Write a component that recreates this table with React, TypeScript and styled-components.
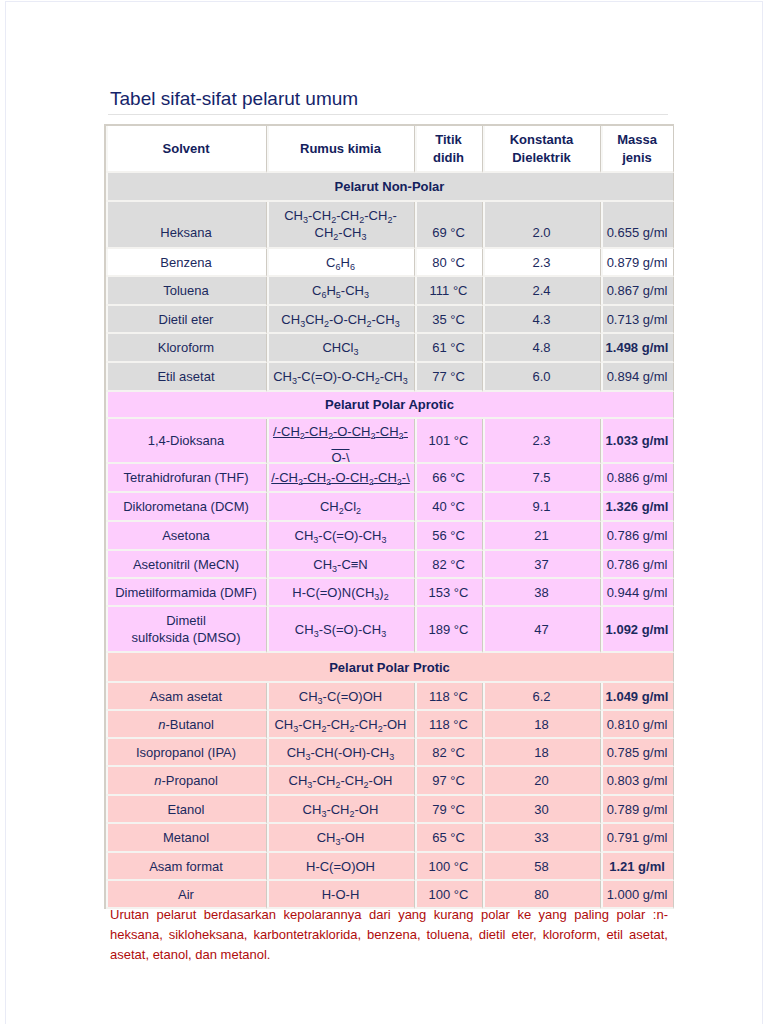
import React from "react";
import styled, { createGlobalStyle } from "styled-components";

const GlobalStyle = createGlobalStyle`
  html, body {
    margin: 0;
    padding: 0;
    background: #ffffff;
  }
  body {
    font-family: "Liberation Sans", Arial, sans-serif;
  }
`;

// "CH_3-CH_2" -> CH<sub>3</sub>-CH<sub>2</sub>
const f = (s: string): React.ReactNode[] =>
  s.split(/_(\d)/).map((part, i) =>
    i % 2 === 1 ? <Sub key={i}>{part}</Sub> : <React.Fragment key={i}>{part}</React.Fragment>
  );

type DataRow = {
  name: React.ReactNode;
  formula: React.ReactNode;
  bp: string;
  dielectric: string;
  density: string;
  boldDensity?: boolean;
  h?: number;
  align?: "middle" | "bottom" | "top";
};

type Section = {
  title: string;
  bg: string;
  h: number;
  rows: DataRow[];
  rowBg?: (i: number) => string;
};

// built at render time so the styled parts below are already defined
const buildSections = (): Section[] => [
  {
    title: "Pelarut Non-Polar",
    bg: "#dcdcdc",
    h: 29,
    rowBg: (i) => (i === 1 ? "#ffffff" : "#dcdcdc"),
    rows: [
      {
        name: "Heksana",
        formula: (
          <>
            {f("CH_3-CH_2-CH_2-CH_2-")}
            <br />
            {f("CH_2-CH_3")}
          </>
        ),
        bp: "69 °C",
        dielectric: "2.0",
        density: "0.655 g/ml",
        h: 47,
        align: "bottom",
      },
      { name: "Benzena", formula: f("C_6H_6"), bp: "80 °C", dielectric: "2.3", density: "0.879 g/ml", h: 28 },
      { name: "Toluena", formula: f("C_6H_5-CH_3"), bp: "111 °C", dielectric: "2.4", density: "0.867 g/ml", h: 29 },
      { name: "Dietil eter", formula: f("CH_3CH_2-O-CH_2-CH_3"), bp: "35 °C", dielectric: "4.3", density: "0.713 g/ml", h: 28 },
      { name: "Kloroform", formula: f("CHCl_3"), bp: "61 °C", dielectric: "4.8", density: "1.498 g/ml", boldDensity: true, h: 29 },
      { name: "Etil asetat", formula: f("CH_3-C(=O)-O-CH_2-CH_3"), bp: "77 °C", dielectric: "6.0", density: "0.894 g/ml", h: 29 },
    ],
  },
  {
    title: "Pelarut Polar Aprotic",
    bg: "#fdcdfd",
    h: 27,
    rows: [
      {
        name: "1,4-Dioksana",
        formula: (
          <RingFormula>
            <Underlined>{f("/-CH_2-CH_2-O-CH_2-CH_2-")}</Underlined>
            <Overlined>O-\</Overlined>
          </RingFormula>
        ),
        bp: "101 °C",
        dielectric: "2.3",
        density: "1.033 g/ml",
        boldDensity: true,
        h: 45,
      },
      {
        name: "Tetrahidrofuran (THF)",
        formula: <Underlined>{f("/-CH_2-CH_2-O-CH_2-CH_2-\\")}</Underlined>,
        bp: "66 °C",
        dielectric: "7.5",
        density: "0.886 g/ml",
        h: 29,
      },
      { name: "Diklorometana (DCM)", formula: f("CH_2Cl_2"), bp: "40 °C", dielectric: "9.1", density: "1.326 g/ml", boldDensity: true, h: 29 },
      { name: "Asetona", formula: f("CH_3-C(=O)-CH_3"), bp: "56 °C", dielectric: "21", density: "0.786 g/ml", h: 29 },
      { name: "Asetonitril (MeCN)", formula: f("CH_3-C≡N"), bp: "82 °C", dielectric: "37", density: "0.786 g/ml", h: 28 },
      { name: "Dimetilformamida (DMF)", formula: f("H-C(=O)N(CH_3)_2"), bp: "153 °C", dielectric: "38", density: "0.944 g/ml", h: 28 },
      {
        name: (
          <>
            Dimetil
            <br />
            sulfoksida (DMSO)
          </>
        ),
        formula: f("CH_3-S(=O)-CH_3"),
        bp: "189 °C",
        dielectric: "47",
        density: "1.092 g/ml",
        boldDensity: true,
        h: 46,
      },
    ],
  },
  {
    title: "Pelarut Polar Protic",
    bg: "#fdcfcf",
    h: 30,
    rows: [
      { name: "Asam asetat", formula: f("CH_3-C(=O)OH"), bp: "118 °C", dielectric: "6.2", density: "1.049 g/ml", boldDensity: true, h: 28 },
      {
        name: (
          <>
            <i>n</i>-Butanol
          </>
        ),
        formula: f("CH_3-CH_2-CH_2-CH_2-OH"),
        bp: "118 °C",
        dielectric: "18",
        density: "0.810 g/ml",
        h: 28,
      },
      { name: "Isopropanol (IPA)", formula: f("CH_3-CH(-OH)-CH_3"), bp: "82 °C", dielectric: "18", density: "0.785 g/ml", h: 28 },
      {
        name: (
          <>
            <i>n</i>-Propanol
          </>
        ),
        formula: f("CH_3-CH_2-CH_2-OH"),
        bp: "97 °C",
        dielectric: "20",
        density: "0.803 g/ml",
        h: 29,
      },
      { name: "Etanol", formula: f("CH_3-CH_2-OH"), bp: "79 °C", dielectric: "30", density: "0.789 g/ml", h: 28 },
      { name: "Metanol", formula: f("CH_3-OH"), bp: "65 °C", dielectric: "33", density: "0.791 g/ml", h: 29 },
      { name: "Asam format", formula: f("H-C(=O)OH"), bp: "100 °C", dielectric: "58", density: "1.21 g/ml", boldDensity: true, h: 28 },
      { name: "Air", formula: f("H-O-H"), bp: "100 °C", dielectric: "80", density: "1.000 g/ml", h: 28 },
    ],
  },
];

const App: React.FC = () => {
  const sections = buildSections();
  return (
    <>
      <GlobalStyle />
      <Page>
        <Content>
          <Title>Tabel sifat-sifat pelarut umum</Title>
          <Table>
            <colgroup>
              <col style={{ width: 161 }} />
              <col style={{ width: 148 }} />
              <col style={{ width: 68 }} />
              <col style={{ width: 118 }} />
              <col style={{ width: 73 }} />
            </colgroup>
            <thead>
              <Row $h={47}>
                <HeadCell>Solvent</HeadCell>
                <HeadCell>Rumus kimia</HeadCell>
                <HeadCell>
                  Titik
                  <br />
                  didih
                </HeadCell>
                <HeadCell>
                  Konstanta
                  <br />
                  Dielektrik
                </HeadCell>
                <HeadCell>
                  Massa
                  <br />
                  jenis
                </HeadCell>
              </Row>
            </thead>
            {sections.map((sec) => (
              <tbody key={sec.title}>
                <Row $h={sec.h}>
                  <SectionCell colSpan={5} $bg={sec.bg}>
                    {sec.title}
                  </SectionCell>
                </Row>
                {sec.rows.map((r, i) => {
                  const bg = sec.rowBg ? sec.rowBg(i) : sec.bg;
                  const align = r.align || "middle";
                  return (
                    <Row key={i} $h={r.h || 28}>
                      <Cell $bg={bg} $align={align}>{r.name}</Cell>
                      <Cell $bg={bg} $align={align}>{r.formula}</Cell>
                      <Cell $bg={bg} $align={align}>{r.bp}</Cell>
                      <Cell $bg={bg} $align={align}>{r.dielectric}</Cell>
                      <Cell $bg={bg} $align={align} $bold={r.boldDensity}>
                        {r.density}
                      </Cell>
                    </Row>
                  );
                })}
              </tbody>
            ))}
          </Table>
          <Note>
            Urutan pelarut berdasarkan kepolarannya dari yang kurang polar ke yang paling polar :n-heksana,
            sikloheksana, karbontetraklorida, benzena, toluena, dietil eter, kloroform, etil asetat, asetat,
            etanol, dan metanol.
          </Note>
        </Content>
      </Page>
    </>
  );
};

export default App;

const Page = styled.div`
  box-sizing: border-box;
  margin: 1px 5px 0;
  height: 1023px;
  border: 1px solid #e9ebf6;
  border-bottom: none;
  overflow: hidden;
`;

const Content = styled.div`
  width: 568px;
  padding: 86px 0 0 98px;
`;

const Title = styled.h1`
  margin: 0 0 0 4px;
  padding: 0 0 4px 2px;
  width: 558px;
  font-size: 19px;
  line-height: 22px;
  font-weight: normal;
  color: #15246a;
  border-bottom: 1px solid #e2e2e2;
`;

const Table = styled.table`
  margin-top: 9px;
  width: 568px;
  table-layout: fixed;
  border-collapse: separate;
  border-spacing: 0;
  border-top: 2px solid #d3cfc7;
  border-left: 2px solid #d3cfc7;
  font-size: 13px;
  color: #1b295e;
`;

const Row = styled.tr<{ $h: number }>`
  height: ${(p) => p.$h}px;
`;

const BaseCell = styled.td`
  box-sizing: border-box;
  padding: 0 1px;
  text-align: center;
  border-right: 1px solid #cfcbc3;
  border-bottom: 2px solid #f4f3f0;
  box-shadow: inset 2px 0 0 #f7f7f5;
  line-height: 17px;
`;

const HeadCell = styled(BaseCell).attrs({ as: "th" })`
  background: #ffffff;
  font-weight: bold;
  line-height: 18px;
  color: #13215c;
`;

const SectionCell = styled(BaseCell)<{ $bg: string }>`
  background: ${(p) => p.$bg};
  font-weight: bold;
  color: #13215c;
`;

const Cell = styled(BaseCell)<{ $bg: string; $align?: string; $bold?: boolean }>`
  background: ${(p) => p.$bg};
  vertical-align: ${(p) => p.$align || "middle"};
  padding-bottom: ${(p) => (p.$align === "bottom" ? "6px" : "0")};
  font-weight: ${(p) => (p.$bold ? "bold" : "normal")};
  white-space: nowrap;
`;

const Sub = styled.sub`
  font-size: 9px;
  line-height: 0;
  vertical-align: -3px;
`;

const RingFormula = styled.div`
  display: flex;
  flex-direction: column;
  align-items: center;
  line-height: 26px;
  margin-top: -6px;
  margin-bottom: -14px;
`;

const Underlined = styled.span`
  text-decoration: underline;
`;

const Overlined = styled.span`
  text-decoration: overline;
`;

const Note = styled.p`
  margin: -4px 0 0;
  padding: 0 4px 0 6px;
  font-size: 13px;
  line-height: 20px;
  text-align: justify;
  color: #b00b0b;
`;
